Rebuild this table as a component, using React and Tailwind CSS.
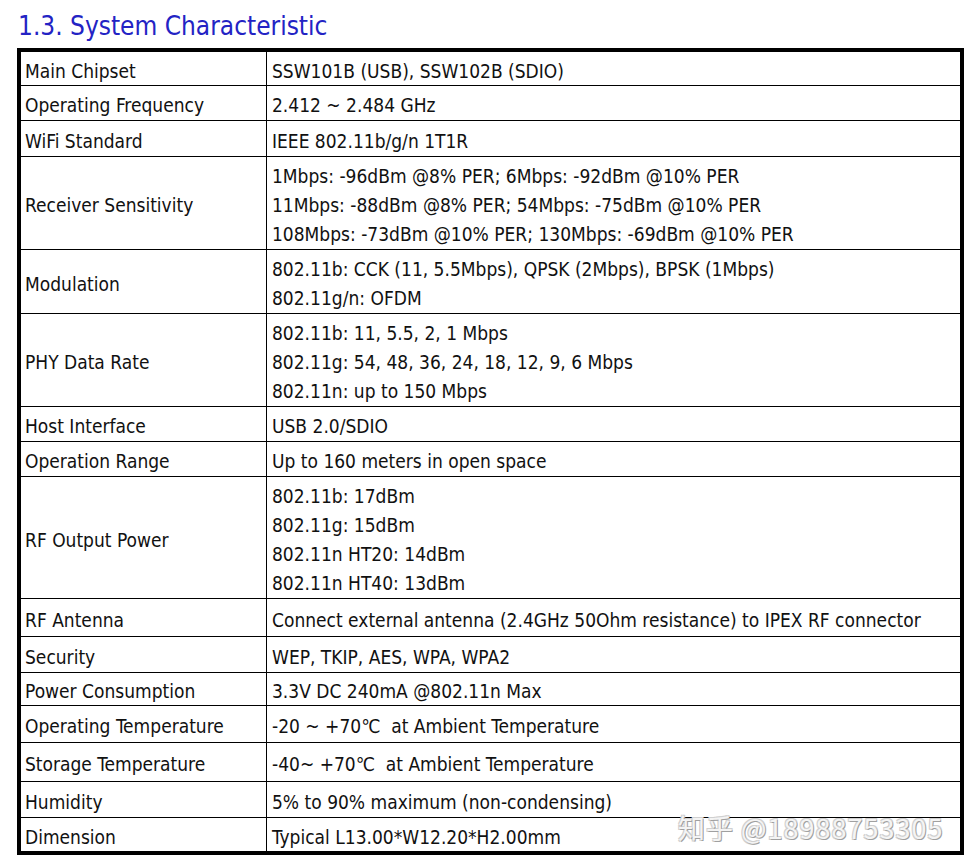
import React from 'react';

const rows = [
  { label: 'Main Chipset', h: 'h-[34px]', lines: ['SSW101B (USB), SSW102B (SDIO)'] },
  { label: 'Operating Frequency', h: 'h-[35px]', lines: ['2.412 ~ 2.484 GHz'] },
  { label: 'WiFi Standard', h: 'h-[36px]', lines: ['IEEE 802.11b/g/n 1T1R'] },
  {
    label: 'Receiver Sensitivity',
    h: 'h-[93px]',
    lines: [
      '1Mbps: -96dBm @8% PER; 6Mbps: -92dBm @10% PER',
      '11Mbps: -88dBm @8% PER; 54Mbps: -75dBm @10% PER',
      '108Mbps: -73dBm @10% PER; 130Mbps: -69dBm @10% PER',
    ],
  },
  {
    label: 'Modulation',
    h: 'h-[64px]',
    lines: ['802.11b: CCK (11, 5.5Mbps), QPSK (2Mbps), BPSK (1Mbps)', '802.11g/n: OFDM'],
  },
  {
    label: 'PHY Data Rate',
    h: 'h-[93px]',
    lines: ['802.11b: 11, 5.5, 2, 1 Mbps', '802.11g: 54, 48, 36, 24, 18, 12, 9, 6 Mbps', '802.11n: up to 150 Mbps'],
  },
  { label: 'Host Interface', h: 'h-[35px]', lines: ['USB 2.0/SDIO'] },
  { label: 'Operation Range', h: 'h-[35px]', lines: ['Up to 160 meters in open space'] },
  {
    label: 'RF Output Power',
    h: 'h-[122px]',
    lines: ['802.11b: 17dBm', '802.11g: 15dBm', '802.11n HT20: 14dBm', '802.11n HT40: 13dBm'],
  },
  { label: 'RF Antenna', h: 'h-[38px]', lines: ['Connect external antenna (2.4GHz 50Ohm resistance) to IPEX RF connector'] },
  { label: 'Security', h: 'h-[36px]', lines: ['WEP, TKIP, AES, WPA, WPA2'] },
  { label: 'Power Consumption', h: 'h-[33px]', lines: ['3.3V DC 240mA @802.11n Max'] },
  { label: 'Operating Temperature', h: 'h-[37px]', lines: ['-20 ~ +70\u2103  at Ambient Temperature'] },
  { label: 'Storage Temperature', h: 'h-[39px]', lines: ['-40~ +70\u2103  at Ambient Temperature'] },
  { label: 'Humidity', h: 'h-[36px]', lines: ['5% to 90% maximum (non-condensing)'] },
  { label: 'Dimension', h: 'h-[33px]', lines: ['Typical L13.00*W12.20*H2.00mm'] },
];

export default function App() {
  return (
    <div className="relative w-[976px] h-[868px] bg-white overflow-hidden font-['DejaVu_Sans_Condensed','DejaVu_Sans',sans-serif] text-[#111]">
      <h1 className="pl-[18px] pt-[8px] h-[48px] text-[26px] leading-[36px] text-[#2323c4]">1.3. System Characteristic</h1>

      <div className="ml-[17px] w-[947px] border-4 border-black flex flex-col">
        {rows.map((r, i) => (
          <div
            key={r.label}
            className={`flex ${r.h} ${i < rows.length - 1 ? 'border-b border-black' : ''}`}
          >
            <div className="w-[246px] shrink-0 border-r border-black flex items-center pl-[4px] pt-[5px] text-[19px] leading-[29px] whitespace-nowrap">
              {r.label}
            </div>
            <div className="flex-1 flex flex-col justify-center pl-[5px] pt-[5px] text-[19px] leading-[29px] whitespace-pre">
              {r.lines.map((l) => (
                <div key={l}>{l}</div>
              ))}
            </div>
          </div>
        ))}
      </div>

      {/* watermark */}
      <div className="absolute left-[678px] top-[810px] text-[27px] leading-[36px] tracking-[1px] text-[#f4f4f4] font-['Noto_Sans_CJK_SC','DejaVu_Sans',sans-serif] [text-shadow:1px_1px_0_#a0a0a0,-1px_-1px_0_#d0d0d0,1px_-1px_0_#d0d0d0,-1px_1px_0_#d0d0d0]">
        知乎 @18988753305
      </div>
    </div>
  );
}
